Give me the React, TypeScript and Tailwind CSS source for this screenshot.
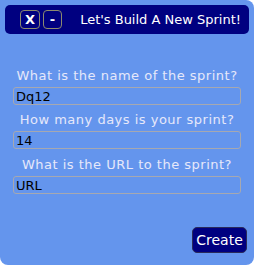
import React, { useState } from 'react';

const font = { fontFamily: '"DejaVu Sans", Verdana, sans-serif' };
const labelCls = 'text-center text-[13px] leading-4 text-[#e6e8fa] tracking-[0.5px]';
const inputCls = 'block w-[228px] h-[18px] mx-[13px] px-[2px] bg-transparent border border-[#a6a8b0] rounded-[3px] text-[13px] leading-4 text-black outline-none';

export default function App() {
  const [name, setName] = useState('Dq12');
  const [days, setDays] = useState('14');
  const [url, setUrl] = useState('URL');

  return (
    <div className="w-[254px] h-[265px] bg-white" style={font}>
      <div className="w-[254px] h-[265px] bg-[#6495ed] rounded-[8px] rounded-tl-none flex flex-col pt-[5px]">
        {/* header bar */}
        <div className="mx-[5px] h-[29px] bg-[#000080] rounded-[5px] flex items-center pl-[15px] pr-[8px]">
          <button className="w-[20px] h-[19px] border border-[#8c8a6e] rounded-[4px] text-white font-bold text-[13px] leading-none flex items-center justify-center">X</button>
          <button className="ml-[3px] w-[19px] h-[19px] border border-[#8c8a6e] rounded-[4px] text-white font-bold text-[13px] leading-none flex items-center justify-center">-</button>
          <div className="ml-auto text-white text-[13px] leading-4">Let's Build A New Sprint!</div>
        </div>

        <div className="flex flex-col mt-[34px]">
          <div className={labelCls}>What is the name of the sprint?</div>
          <input className={`${inputCls} mt-[3px]`} value={name} onChange={e => setName(e.target.value)} />
          <div className={`${labelCls} mt-[7px]`}>How many days is your sprint?</div>
          <input className={`${inputCls} mt-[3px]`} value={days} onChange={e => setDays(e.target.value)} />
          <div className={`${labelCls} mt-[8px]`}>What is the URL to the sprint?</div>
          <input className={`${inputCls} mt-[3px]`} value={url} onChange={e => setUrl(e.target.value)} />
        </div>

        <div className="flex justify-end mt-auto mb-[12px] mr-[7px]">
          <button className="w-[55px] h-[26px] bg-[#000080] border border-[#2a2a5a] rounded-[5px] text-white text-[14px] leading-none">Create</button>
        </div>
      </div>
    </div>
  );
}
